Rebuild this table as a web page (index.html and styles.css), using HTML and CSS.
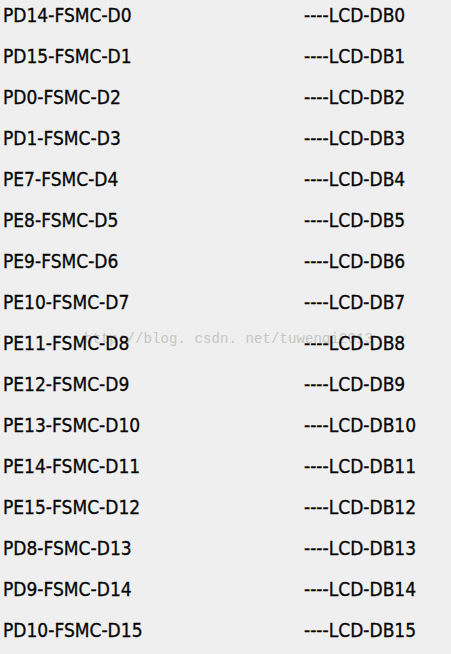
FILE: index.html
```html
<!DOCTYPE html>
<html lang="zh">

<head>
    <meta charset="utf-8">
    <meta name="viewport" content="width=device-width, initial-scale=1.0">
    <title>FSMC - LCD</title>
    <link rel="stylesheet" href="styles.css">
</head>

<body>
    <div class="pin-table">
        <div class="pin">PD14-FSMC-D0</div><div class="lcd">----LCD-DB0</div>
        <div class="pin">PD15-FSMC-D1</div><div class="lcd">----LCD-DB1</div>
        <div class="pin">PD0-FSMC-D2</div><div class="lcd">----LCD-DB2</div>
        <div class="pin">PD1-FSMC-D3</div><div class="lcd">----LCD-DB3</div>
        <div class="pin">PE7-FSMC-D4</div><div class="lcd">----LCD-DB4</div>
        <div class="pin">PE8-FSMC-D5</div><div class="lcd">----LCD-DB5</div>
        <div class="pin">PE9-FSMC-D6</div><div class="lcd">----LCD-DB6</div>
        <div class="pin">PE10-FSMC-D7</div><div class="lcd">----LCD-DB7</div>
        <div class="pin">PE11-FSMC-D8</div><div class="lcd">----LCD-DB8</div>
        <div class="pin">PE12-FSMC-D9</div><div class="lcd">----LCD-DB9</div>
        <div class="pin">PE13-FSMC-D10</div><div class="lcd">----LCD-DB10</div>
        <div class="pin">PE14-FSMC-D11</div><div class="lcd">----LCD-DB11</div>
        <div class="pin">PE15-FSMC-D12</div><div class="lcd">----LCD-DB12</div>
        <div class="pin">PD8-FSMC-D13</div><div class="lcd">----LCD-DB13</div>
        <div class="pin">PD9-FSMC-D14</div><div class="lcd">----LCD-DB14</div>
        <div class="pin">PD10-FSMC-D15</div><div class="lcd">----LCD-DB15</div>
    </div>

    <div class="watermark">http://blog.&nbsp;csdn.&nbsp;net/tuwenqi2013</div>
</body>

</html>
```

FILE: styles.css
```css
html {
    font-family: 'DejaVu Sans Condensed', 'DejaVu Sans', sans-serif;
    font-stretch: condensed;
    box-sizing: border-box;
}

body {
    margin: 0px;
    padding: 4px 0px 0px 3px;
    background-color: #efefef;
    color: #050505;
    min-height: 654px;
    box-sizing: border-box;
}

.pin-table {
    display: grid;
    grid-template-columns: 301px auto;
    row-gap: 19px;
    font-size: 19px;
    line-height: 22px;
    -webkit-text-stroke: 0.3px #050505;
}

.pin,
.lcd {
    white-space: nowrap;
}

/* faint blog watermark, sits under the table text */
.watermark {
    position: absolute;
    z-index: -1;
    left: 84px;
    top: 331px;
    font-family: 'Liberation Mono', monospace;
    font-size: 14px;
    letter-spacing: 0.1px;
    color: #c6c6c6;
    white-space: nowrap;
}
```
